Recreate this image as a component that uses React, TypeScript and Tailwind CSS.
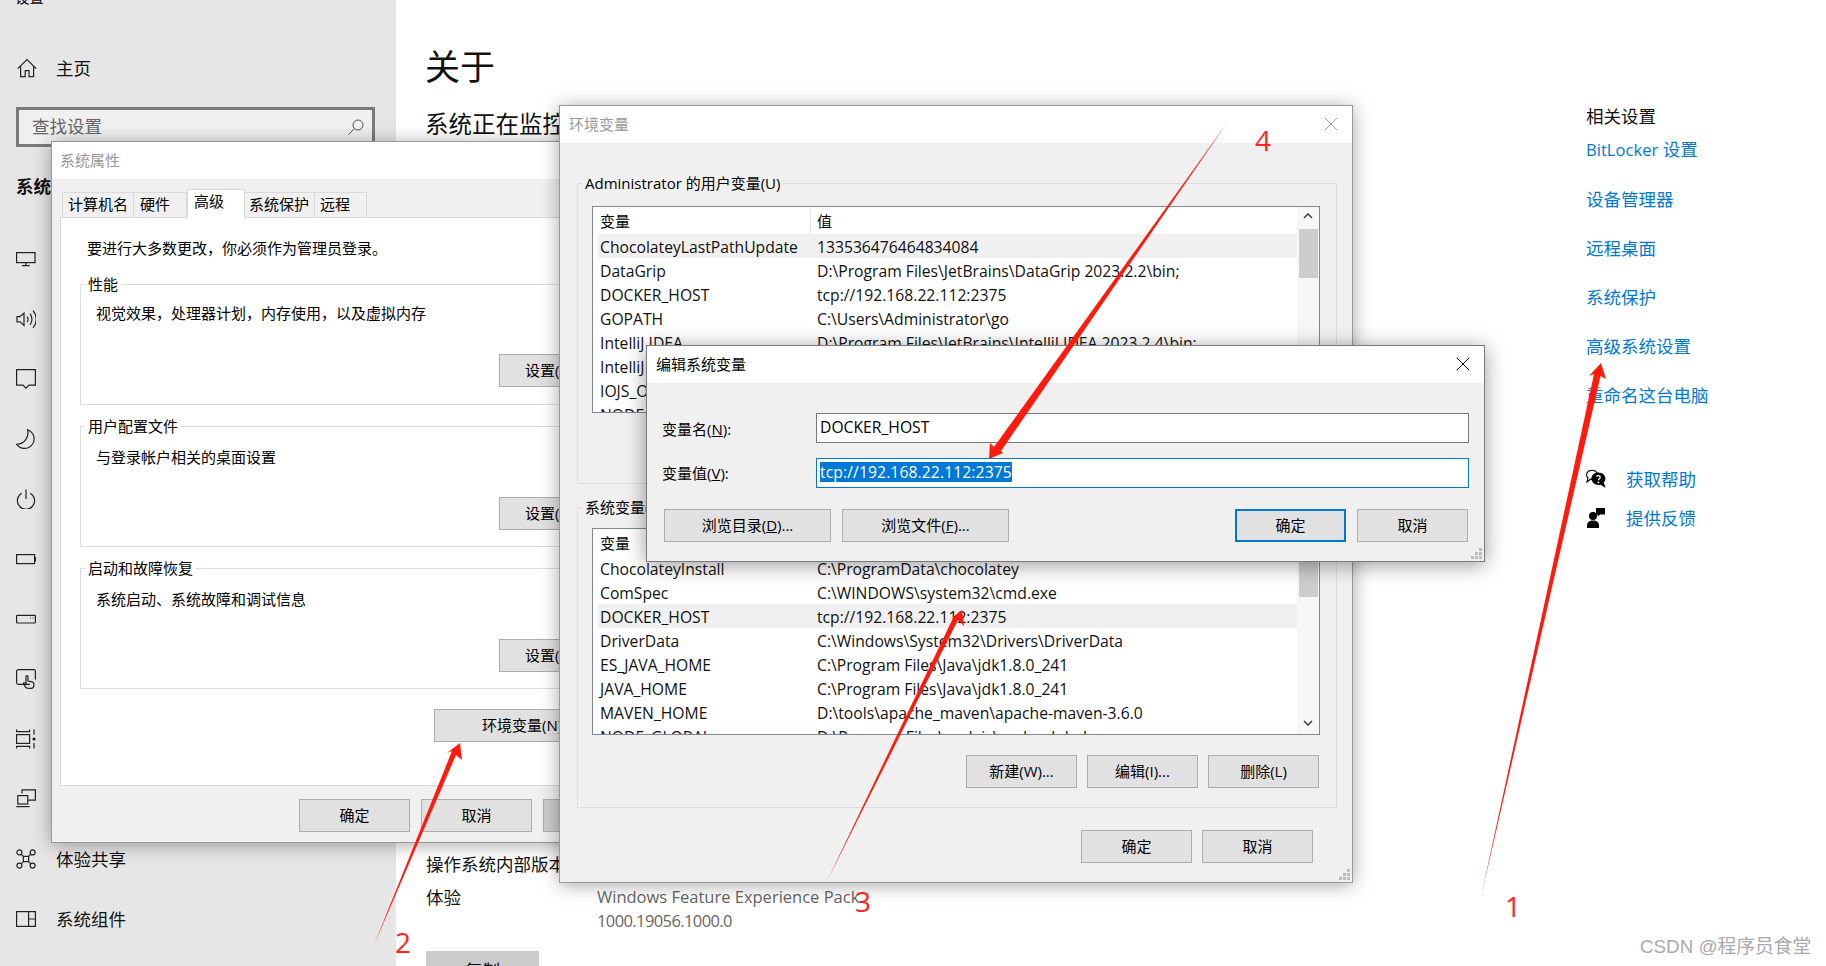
import React from 'react';

const Icon = ({ children, className = '' }: { children: React.ReactNode; className?: string }) => (
  <svg viewBox="0 0 20 20" fill="none" stroke="#222" strokeWidth="1.2" className={`w-[20px] h-[20px] shrink-0 ${className}`}>
    {children}
  </svg>
);

const sideIcons: React.ReactNode[] = [
  <><rect x="0.6" y="3.6" width="18.4" height="10" /><path d="M9.8 13.6v2.6M6 16.6h7.6" /></>,
  <><path d="M1 7.6h3l4-3.6v12.4l-4-3.6H1z" /><path d="M11 7.5a4.5 4.5 0 0 1 0 5.6M14 4.6a9 9 0 0 1 0 11.2M17 1.6a13 13 0 0 1 0 17.2" /></>,
  <path d="M.6.6h18.8v15.6h-6.4L10 19.2l-3-3H.6z" />,
  <path d="M11.5.7A9.6 9.6 0 1 1 .7 15.4 11.5 11.5 0 0 0 11.5.7z" />,
  <><path d="M5.8 4.2a8.6 8.6 0 1 0 8.4 0" /><path d="M10 .4v9.6" /></>,
  <><rect x=".6" y="5.6" width="18" height="9" /><path d="M18.6 8.6h1v3h-1z" fill="#222" /></>,
  <><rect x=".6" y="6.4" width="18.8" height="7.6" rx=".8" /><path d="M14 9h1M16.6 9h1" /></>,
  <><path d="M14 15.4H2.4A1.8 1.8 0 0 1 .6 13.6V2.4C.6 1.4 1.4.6 2.4.6h15.4c.9 0 1.6.8 1.6 1.8v8" /><path d="M11 19.2c-1.4-1-3-3-3.4-4.4-.3-1 .8-1.3 1.4-.6l1 1V7.6c0-1.4 2-1.4 2 0v4.4l4 .8c1 .2 1.9 1 1.9 2.2v1.6c0 1.6-1.2 2.8-2.8 2.8z" /></>,
  <><path d="M.6.4v2.2h13V.4M.6 19.6v-2.2h13v2.2" /><rect x=".6" y="5.6" width="13" height="8.8" /><path d="M18 .4v5.4M18 14v5.6" /><circle cx="18" cy="10" r="1.6" fill="#222" stroke="none" /></>,
  <><path d="M6 4.6V.8h13.4v10.4H12" /><rect x="1.8" y="6.6" width="10" height="8.4" /><path d="M.2 17.6h13.4" /></>,
  <><circle cx="3.4" cy="3.4" r="2.5" /><circle cx="16.6" cy="3.4" r="2.5" /><circle cx="3.4" cy="16.6" r="2.5" /><circle cx="16.6" cy="16.6" r="2.5" /><rect x="7.4" y="7.4" width="5.2" height="5.2" /><path d="M5.2 5.2l2.2 2.2M14.8 5.2l-2.2 2.2M5.2 14.8l2.2-2.2M14.8 14.8l-2.2-2.2" /></>,
  <><rect x=".6" y="2.6" width="18.8" height="14.8" /><path d="M12.6 2.6v14.8M12.6 10h6.8" /></>,
];

const sideLabels: Record<number, string> = { 10: '体验共享', 11: '系统组件' };

const userVars = [
  ['ChocolateyLastPathUpdate', '133536476464834084'],
  ['DataGrip', 'D:\\Program Files\\JetBrains\\DataGrip 2023.2.2\\bin;'],
  ['DOCKER_HOST', 'tcp://192.168.22.112:2375'],
  ['GOPATH', 'C:\\Users\\Administrator\\go'],
  ['IntelliJ IDEA', 'D:\\Program Files\\JetBrains\\IntelliJ IDEA 2023.2.4\\bin;'],
  ['IntelliJ IDEA Community', ''],
  ['IOJS_ORG_MIRROR', ''],
  ['NODE_HOME', ''],
];

const sysVars = [
  ['ChocolateyInstall', 'C:\\ProgramData\\chocolatey'],
  ['ComSpec', 'C:\\WINDOWS\\system32\\cmd.exe'],
  ['DOCKER_HOST', 'tcp://192.168.22.112:2375'],
  ['DriverData', 'C:\\Windows\\System32\\Drivers\\DriverData'],
  ['ES_JAVA_HOME', 'C:\\Program Files\\Java\\jdk1.8.0_241'],
  ['JAVA_HOME', 'C:\\Program Files\\Java\\jdk1.8.0_241'],
  ['MAVEN_HOME', 'D:\\tools\\apache_maven\\apache-maven-3.6.0'],
  ['NODE_GLOBAL', 'D:\\Program Files\\nodejs\\node_global'],
];

const Btn = ({ children, className = 'w-[111px]' }: { children: React.ReactNode; className?: string }) => (
  <button className={`h-[33px] shrink-0 bg-[#e1e1e1] border border-[#adadad] text-[15px] text-black flex items-center justify-center ${className}`}>
    {children}
  </button>
);

const CloseX = () => (
  <svg viewBox="0 0 14 14" stroke="currentColor" strokeWidth="1" className="w-[14px] h-[14px] -mt-[2px]">
    <path d="M.8.8l12.4 12.4M13.2.8L.8 13.2" />
  </svg>
);

const Gripper = () => (
  <svg viewBox="0 0 12 12" fill="#bdbdbd" className="absolute right-[1px] bottom-[1px] w-[12px] h-[12px]">
    <path d="M8 0h3v3H8zM4 4h3v3H4zM8 4h3v3H8zM0 8h3v3H0zM4 8h3v3H4zM8 8h3v3H8z" />
  </svg>
);

const Group = ({ label, className, children }: { label: string; className: string; children: React.ReactNode }) => (
  <fieldset className={`border border-[#dcdcdc] ${className}`}>
    <legend className="ml-[4px] px-[3px] text-[15px] leading-[20px] text-black">{label}</legend>
    {children}
  </fieldset>
);

const VarList = ({ rows, selected, thumb }: { rows: string[][]; selected: number; thumb: string }) => (
  <div className="ml-[14px] w-[728px] h-[207px] border border-[#828790] bg-white flex overflow-hidden">
    <div className="w-[704px] pl-[5px]">
      <div className="flex h-[27px] pt-[2px] items-center text-black text-[15px]">
        <div className="w-[213px] h-full pl-[2px] flex items-center border-r border-[#e5e5e5]">变量</div>
        <div className="pl-[6px]">值</div>
      </div>
      {rows.map((r, i) => (
        <div key={r[0]} className={`flex h-[24px] pt-[3px] items-center text-[15.7px] text-[#111] whitespace-nowrap ${i === selected ? 'bg-[#f0f0f0]' : ''}`}>
          <div className="w-[219px] pl-[2px]">{r[0]}</div>
          <div>{r[1]}</div>
        </div>
      ))}
    </div>
    <div className="w-[22px] bg-[#f7f7f7] flex flex-col items-center pt-[6px] relative">
      <svg viewBox="0 0 10 6" fill="none" stroke="#444" strokeWidth="1.6" className="w-[10px] h-[6px]"><path d="M1 5l4-4 4 4" /></svg>
      <div className={`w-[19px] h-[49px] bg-[#cdcdcd] ${thumb}`} />
      <svg viewBox="0 0 10 6" fill="none" stroke="#444" strokeWidth="1.6" className="w-[10px] h-[6px] absolute bottom-[8px]"><path d="M1 1l4 4 4-4" /></svg>
    </div>
  </div>
);

export default function App() {
  return (
    <div className="relative flex w-[1826px] h-[966px] overflow-hidden bg-white font-['Open_Sans','Noto_Sans_CJK_SC',sans-serif] text-[#111]">
      {/* settings sidebar */}
      <aside className="w-[396px] shrink-0 bg-[#e6e6e6] flex flex-col">
        <div className="-mt-[9px] ml-[15px] h-[14px] leading-[14px] text-[14.5px]">设置</div>
        <div className="mt-[51px] flex items-center h-[24px] pl-[16px] text-[17.5px]">
          <Icon className="ml-[1px]"><path d="M.8 10.6L10 1.6l9.2 9M3.6 8.4v10.2h4.6v-6h3.8v6h4.6V8.4" /></Icon>
          <span className="ml-[19px]">主页</span>
        </div>
        <div className="mt-[27px] ml-[16px] mr-[21px] h-[40px] border-[3px] border-[#7a7a7a] bg-[#f0f0f0] flex items-center justify-between pl-[13px] pr-[8px] pb-[2px] text-[17.5px] text-[#666]">
          <span>查找设置</span>
          <svg viewBox="0 0 16 16" fill="none" stroke="#555" strokeWidth="1" className="w-[16px] h-[16px] mt-[2px]">
            <circle cx="10" cy="6" r="5" /><path d="M6.4 9.6L.6 15.6" />
          </svg>
        </div>
        <div className="mt-[27px] ml-[16px] h-[24px] leading-[24px] text-[17.5px] font-bold">系统</div>
        <div className="mt-[31px] pl-[16px] flex flex-col">
          {sideIcons.map((ic, i) => (
            <div key={i} className="h-[60px] flex items-center text-[17.5px]">
              <Icon>{ic}</Icon>
              {sideLabels[i] && <span className="ml-[20px]">{sideLabels[i]}</span>}
            </div>
          ))}
        </div>
      </aside>

      {/* about page */}
      <main className="flex-1 pl-[30px] pt-[42px] flex flex-col">
        <h1 className="text-[35px] leading-[50px] -ml-[1px]">关于</h1>
        <p className="mt-[15px] text-[23.5px] leading-[34px] -ml-[1px]">系统正在监控并保护你的电脑。</p>
        <div className="mt-[711px] text-[17.5px] leading-[24px]">操作系统内部版本</div>
        <div className="mt-[9px] flex text-[17.5px] leading-[24px]">
          <div className="w-[171px]">体验</div>
          <div className="text-[#666] text-[16.5px]">
            <div>Windows Feature Experience Pack</div>
            <div className="tracking-[-0.6px]">1000.19056.1000.0</div>
          </div>
        </div>
        <button className="mt-[18px] w-[113px] h-[38px] shrink-0 bg-[#ccc] text-[17.5px]">复制</button>
      </main>

      <aside className="w-[240px] shrink-0 pt-[104px] text-[17.5px] leading-[24px]">
        <div>相关设置</div>
        <div className="mt-[9px] flex flex-col gap-[25px] text-[#0078d7]">
          <a><span className="text-[16.6px]">BitLocker</span> 设置</a>
          <a>设备管理器</a>
          <a>远程桌面</a>
          <a>系统保护</a>
          <a>高级系统设置</a>
          <a>重命名这台电脑</a>
        </div>
        <div className="mt-[60px] flex items-center text-[#0078d7]">
          <svg viewBox="0 0 20 20" className="w-[20px] h-[20px] mr-[20px]">
            <path d="M6 1.2c3 0 5.4 2 5.4 4.6S9 10.4 6 10.4c-.6 0-1 0-1.5-.2L1 13l1-4C1 8 .6 7 .6 5.8.6 3.2 3 1.2 6 1.2z" fill="#fff" stroke="#000" strokeWidth="1.1" />
            <path d="M12.4 3.4c4 0 7 2.8 7 6.2 0 1.6-.6 3-1.6 4l1.8 5.4-5-3.2c-.7.2-1.4.2-2.2.2-4 0-7-2.8-7-6.4s3-6.2 7-6.2z" fill="#000" />
            <path d="M10.6 7.6c.2-1.2 3.4-1.4 3.6.4.2 1.6-1.8 1.6-1.8 3.2" fill="none" stroke="#fff" strokeWidth="1.3" />
            <circle cx="12.4" cy="13.4" r=".9" fill="#fff" />
          </svg>
          <a>获取帮助</a>
        </div>
        <div className="mt-[15px] flex items-center text-[#0078d7]">
          <svg viewBox="0 0 20 20" fill="#000" className="w-[20px] h-[20px] mr-[20px]">
            <circle cx="7" cy="8" r="4" />
            <path d="M1 20v-2.4C1 14.4 3.4 12.6 7 12.6s6 1.8 6 5V20z" />
            <path d="M10 0h9v6.4h-5l-2.4 2.2V6.4H10z" />
          </svg>
          <a>提供反馈</a>
        </div>
      </aside>

      {/* system properties window */}
      <div className="absolute left-[51px] top-[141px] w-[620px] h-[702px] border border-[#9a9a9a] bg-[#f0f0f0] shadow-[0_2px_18px_rgba(0,0,0,0.35)] flex flex-col">
        <div className="h-[37px] shrink-0 bg-white flex items-center pl-[8px] text-[15px] text-[#999]">系统属性</div>
        <div className="mt-[10px] h-[28px] pl-[10px] flex items-end text-[15px] text-black">
          <div className="w-[72px] h-[25px] pb-[2px] border border-[#d9d9d9] border-b-0 flex items-center pl-[5px]">计算机名</div>
          <div className="w-[53px] h-[25px] pb-[2px] border border-l-0 border-[#d9d9d9] border-b-0 flex items-center pl-[6px]">硬件</div>
          <div className="w-[58px] relative z-10 -mb-[1px] h-[29px] bg-white border border-[#d9d9d9] border-b-0 pl-[6px] leading-[22px]">高级</div>
          <div className="w-[70px] h-[25px] pb-[2px] border border-l-0 border-[#d9d9d9] border-b-0 flex items-center pl-[4px]">系统保护</div>
          <div className="w-[52px] h-[25px] pb-[2px] border border-l-0 border-[#d9d9d9] border-b-0 flex items-center pl-[5px]">远程</div>
        </div>
        <div className="ml-[8px] w-[600px] h-[569px] bg-white border border-[#d9d9d9] text-[15px] text-black">
          <p className="mt-[20px] ml-[26px] leading-[20px]">要进行大多数更改，你必须作为管理员登录。</p>
          <Group label="性能" className="mt-[16px] ml-[19px] w-[539px] h-[131px]">
            <p className="mt-[9px] ml-[15px] leading-[20px]">视觉效果，处理器计划，内存使用，以及虚拟内存</p>
            <div className="mt-[31px] ml-[418px]"><Btn>设置(S)...</Btn></div>
          </Group>
          <Group label="用户配置文件" className="mt-[11px] ml-[19px] w-[539px] h-[131px]">
            <p className="mt-[11px] ml-[15px] leading-[20px]">与登录帐户相关的桌面设置</p>
            <div className="mt-[30px] ml-[418px]"><Btn>设置(E)...</Btn></div>
          </Group>
          <Group label="启动和故障恢复" className="mt-[11px] ml-[19px] w-[539px] h-[131px]">
            <p className="mt-[11px] ml-[15px] leading-[20px]">系统启动、系统故障和调试信息</p>
            <div className="mt-[30px] ml-[418px]"><Btn>设置(T)...</Btn></div>
          </Group>
          <div className="mt-[20px] ml-[373px]"><Btn className="w-[188px]">环境变量(N)...</Btn></div>
        </div>
        <div className="mt-[13px] ml-[247px] flex gap-[11px]">
          <Btn>确定</Btn>
          <Btn>取消</Btn>
          <Btn className="w-[111px] !bg-[#cccccc]">应用</Btn>
        </div>
      </div>

      {/* environment variables window */}
      <div className="absolute left-[559px] top-[105px] w-[794px] h-[778px] border border-[#9a9a9a] bg-[#f0f0f0] shadow-[0_2px_18px_rgba(0,0,0,0.35)] flex flex-col">
        <div className="h-[37px] shrink-0 bg-white flex items-center justify-between pl-[9px] pr-[14px] text-[15px] text-[#999]">
          <span>环境变量</span>
          <CloseX />
        </div>
        <Group label="Administrator 的用户变量(U)" className="mt-[30px] ml-[17px] w-[760px] h-[311px]">
          <div className="mt-[13px]"><VarList rows={userVars} selected={0} thumb="mt-[10px]" /></div>
        </Group>
        <Group label="系统变量(S)" className="mt-[13px] ml-[17px] w-[760px] h-[311px]">
          <div className="mt-[11px]"><VarList rows={sysVars} selected={2} thumb="mt-[7px]" /></div>
          <div className="mt-[20px] ml-[388px] flex gap-[10px]">
            <Btn>新建(W)...</Btn>
            <Btn>编辑(I)...</Btn>
            <Btn>删除(L)</Btn>
          </div>
        </Group>
        <div className="mt-[22px] mr-[39px] flex justify-end gap-[10px]">
          <Btn>确定</Btn>
          <Btn>取消</Btn>
        </div>
        <Gripper />
      </div>

      {/* edit variable dialog */}
      <div className="absolute left-[646px] top-[345px] w-[839px] h-[217px] border border-[#7a7a7a] bg-[#f0f0f0] shadow-[0_3px_20px_rgba(0,0,0,0.4)] flex flex-col text-[15px] text-black">
        <div className="h-[37px] shrink-0 bg-white flex items-center justify-between pl-[9px] pr-[14px]">
          <span>编辑系统变量</span>
          <CloseX />
        </div>
        <div className="mt-[30px] flex items-center pl-[15px]">
          <label className="w-[154px] pt-[3px]">变量名(<u>N</u>):</label>
          <div className="w-[653px] h-[30px] bg-white border border-[#7a7a7a] flex items-center pl-[3px] text-[15.7px]">DOCKER_HOST</div>
        </div>
        <div className="mt-[15px] flex items-center pl-[15px]">
          <label className="w-[154px]">变量值(<u>V</u>):</label>
          <div className="w-[653px] h-[30px] bg-white border border-[#0078d7] flex items-center pl-[3px] pb-[2px] text-[15.7px]">
            <span className="bg-[#0078d7] text-white leading-[20px] tracking-[0.1px]">tcp://192.168.22.112:2375</span>
          </div>
        </div>
        <div className="mt-[21px] flex pl-[17px] pr-[16px]">
          <Btn className="w-[167px]">浏览目录(<u>D</u>)...</Btn>
          <Btn className="w-[167px] ml-[11px]">浏览文件(<u>F</u>)...</Btn>
          <Btn className="w-[111px] ml-auto !border-2 !border-[#0078d7]">确定</Btn>
          <Btn className="w-[111px] ml-[11px]">取消</Btn>
        </div>
        <Gripper />
      </div>

      {/* red annotation arrows */}
      <svg viewBox="0 0 1826 966" fill="#ff1a0e" className="absolute inset-0 w-[1826px] h-[966px] pointer-events-none">
        <polygon points="1601,363 1606,379 1600.5,376 1481,897 1594,374 1589,376" />
        <polygon points="460,743 462,760 456,755 374,945 452,751 447,753" />
        <polygon points="962,610 964,626 958,620 827,881 954,616 951.5,618" />
        <polygon points="989,459 990,443 994,447 1227,123 1001,451 1003,453" />
      </svg>
      <span className="absolute left-[1505px] top-[887px] text-[28px] leading-[38px] text-[#f22]">1</span>
      <span className="absolute left-[395px] top-[923px] text-[28px] leading-[38px] text-[#f22]">2</span>
      <span className="absolute left-[855px] top-[882px] text-[28px] leading-[38px] text-[#f22]">3</span>
      <span className="absolute left-[1255px] top-[121px] text-[28px] leading-[38px] text-[#f22]">4</span>
      <span className="absolute left-[1640px] top-[935px] text-[18.8px] leading-[24px] text-[#aaa] font-['Liberation_Sans','Noto_Sans_CJK_SC',sans-serif]">CSDN @程序员食堂</span>
    </div>
  );
}
